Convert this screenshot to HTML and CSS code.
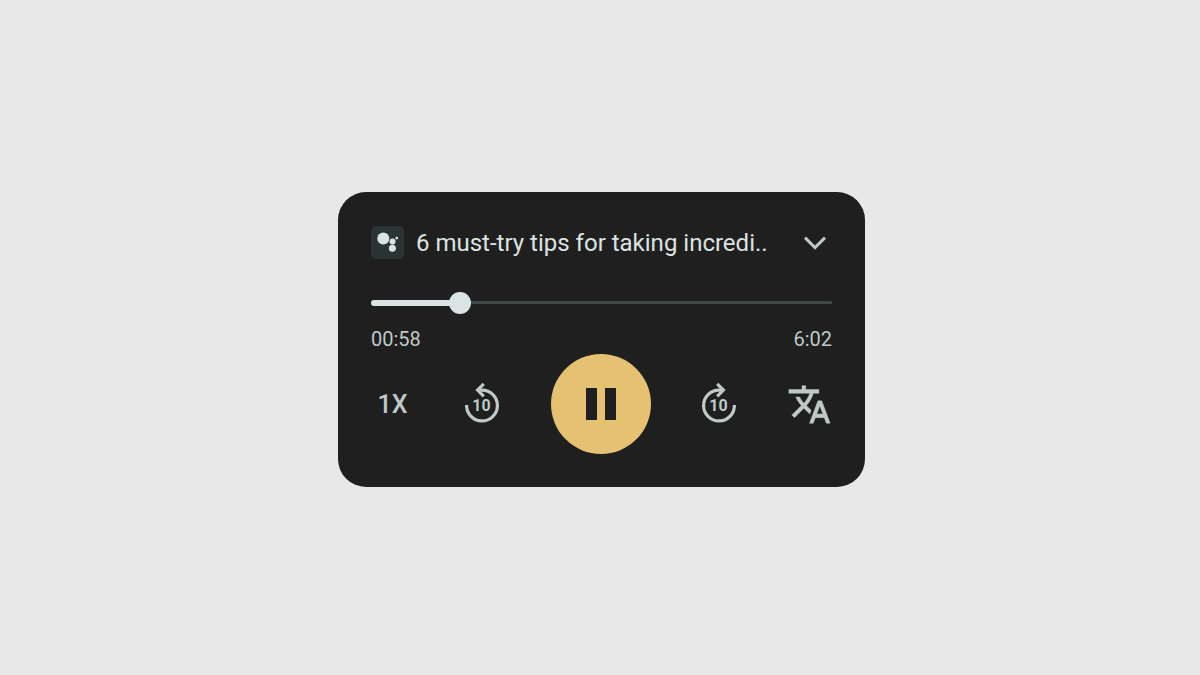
FILE: index.html
```html
<!DOCTYPE html>
<html lang="en">
<head>
    <meta charset="UTF-8">
    <meta name="viewport" content="width=device-width, initial-scale=1.0">
    <title>Audio Player</title>
    <link rel="stylesheet" href="styles.css">
</head>
<body>
    <main class="player">
        <div class="player-header">
            <svg class="app-icon" viewBox="0 0 33 33" aria-hidden="true">
                <circle cx="12.3" cy="12.6" r="6"/>
                <circle cx="21.5" cy="15.4" r="3"/>
                <circle cx="25.7" cy="12.1" r="1.4"/>
                <circle cx="21.4" cy="22.3" r="3.5"/>
            </svg>
            <h1 class="title">6 must-try tips for taking incredi..</h1>
            <button class="icon-btn collapse-btn" aria-label="Collapse">
                <svg viewBox="0 0 24 24">
                    <path d="M2 6.6 12 16.6l10-10" fill="none" stroke="currentColor" stroke-width="3"/>
                </svg>
            </button>
        </div>

        <input class="seek" type="range" min="0" max="362" value="64" aria-label="Seek">

        <div class="times">
            <span>00:58</span>
            <span>6:02</span>
        </div>

        <div class="controls">
            <button class="icon-btn speed-btn" aria-label="Playback speed 1X">1X</button>
            <button class="icon-btn skip-btn" aria-label="Back 10 seconds">
                <svg viewBox="0 0 38 44">
                    <path d="M3.6 23A15.4 15.4 0 1 0 19 8.1H15" fill="none" stroke="currentColor" stroke-width="3.2"/>
                    <path d="M20.8 1.9 14.6 8.1l6.2 6.2" fill="none" stroke="currentColor" stroke-width="3.2"/>
                    <text x="18.5" y="29">10</text>
                </svg>
            </button>
            <button class="play-btn" aria-label="Pause">
                <svg viewBox="0 0 32 34">
                    <path d="M1 1h11v32H1zM20 1h11v32H20z"/>
                </svg>
            </button>
            <button class="icon-btn skip-btn" aria-label="Forward 10 seconds">
                <svg viewBox="0 0 38 44">
                    <path d="M34.4 23A15.4 15.4 0 1 1 19 8.1H23" fill="none" stroke="currentColor" stroke-width="3.2"/>
                    <path d="M17.2 1.9l6.2 6.2-6.2 6.2" fill="none" stroke="currentColor" stroke-width="3.2"/>
                    <text x="18.5" y="29">10</text>
                </svg>
            </button>
            <button class="icon-btn translate-btn" aria-label="Translate">
                <svg viewBox="0 0 24 24">
                    <path fill="currentColor" stroke="currentColor" stroke-width=".25" d="M12.87 15.07l-2.54-2.51.03-.03c1.74-1.94 2.98-4.17 3.71-6.53H17V4h-7V2H8v2H1v1.99h11.17C11.5 7.92 10.44 9.75 9 11.35 8.07 10.32 7.3 9.19 6.69 8h-2c.73 1.63 1.73 3.17 2.98 4.56l-5.09 5.02L4 19l5-5 3.11 3.11.76-2.04zM18.5 10h-2L12 22h2l1.12-3h4.75L21 22h2l-4.5-12zm-2.62 7l1.62-4.33L19.12 17h-3.24z"/>
                </svg>
            </button>
        </div>
    </main>
</body>
</html>
```

FILE: styles.css
```css
* {
    box-sizing: border-box;
}

body {
    display: flex;
    align-items: center;
    justify-content: center;
    min-height: 100vh;
    margin: 0;
    padding: 4px 0 0 3px;
    background-color: #e8e8e8;
    font-family: Roboto, "Liberation Sans", sans-serif;
}

.player {
    width: 100%;
    max-width: 527px;
    padding: 34px 33px 33px;
    border-radius: 28px;
    background-color: #1f1f1f;
    color: #bec9c8;
}

.player-header {
    display: flex;
    align-items: center;
    height: 33px;
}

.app-icon {
    flex: none;
    width: 33px;
    height: 33px;
    border-radius: 5px;
    background-color: #2b3435;
    fill: #dbe4e5;
}

.title {
    flex: 1;
    margin: 0 0 0 12px;
    overflow: hidden;
    color: #dde3e2;
    font-size: 24px;
    font-weight: 400;
    line-height: 30px;
    white-space: nowrap;
}

button {
    flex: none;
    padding: 0;
    border: none;
    cursor: pointer;
}

svg {
    display: block;
}

.icon-btn {
    background: none;
    color: inherit;
    font-family: inherit;
}

.collapse-btn {
    width: 24px;
    margin-right: 5px;
}

.seek {
    display: block;
    width: 100%;
    height: 23px;
    margin: 32px 0 0;
    appearance: none;
    background: none;
    cursor: pointer;
}

/* thick played part over a thin full-width line */
.seek::-webkit-slider-runnable-track {
    height: 6px;
    border-radius: 3px;
    background:
        linear-gradient(#dbe4e5, #dbe4e5) left center / 19% 6px no-repeat,
        linear-gradient(#3d4847, #3d4847) left center / 100% 3px no-repeat;
}

.seek::-webkit-slider-thumb {
    width: 22px;
    height: 22px;
    margin-top: -8px;
    border-radius: 50%;
    appearance: none;
    background-color: #dbe4e5;
}

.times {
    display: flex;
    justify-content: space-between;
    margin-top: 15px;
    font-size: 20px;
    line-height: 20px;
}

.controls {
    display: flex;
    align-items: center;
    justify-content: space-between;
    margin-top: 5px;
}

.speed-btn {
    width: 43px;
    font-size: 25px;
    font-weight: 500;
}

.skip-btn {
    width: 38px;
}

.skip-btn text {
    fill: currentColor;
    font-size: 16px;
    font-weight: 700;
    text-anchor: middle;
}

.play-btn {
    display: flex;
    align-items: center;
    justify-content: center;
    width: 100px;
    height: 100px;
    border-radius: 50%;
    background-color: #e5c271;
}

.play-btn svg {
    width: 32px;
    height: 34px;
    fill: #1f1f1f;
}

.translate-btn {
    width: 45px;
}
```
